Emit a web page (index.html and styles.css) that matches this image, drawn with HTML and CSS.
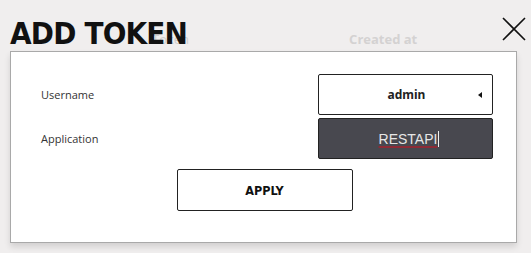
FILE: index.html
```html
<!DOCTYPE html>
<html>
<head>
<meta charset="utf-8">
<link rel="stylesheet" href="styles.css">
</head>
<body>
<div class="page">
  <div class="table-head">
    <span class="col col-token">Token</span>
    <span class="col col-created">Created at</span>
  </div>
  <div class="modal">
    <div class="modal-head">
      <h1 class="title">ADD TOKEN</h1>
      <button class="close" aria-label="Close">
        <svg width="24" height="24" viewBox="0 0 24 24"><path d="M1 1 L23 23 M23 1 L1 23" stroke="#111" stroke-width="1.6" fill="none"/></svg>
      </button>
    </div>
    <div class="card">
      <div class="row">
        <span class="label">Username</span>
        <div class="select">
          <span class="select-value">admin</span>
          <span class="caret-left"></span>
        </div>
      </div>
      <div class="row row-app">
        <span class="label">Application</span>
        <div class="input"><span class="input-text">RESTAPI</span><span class="cursor"></span></div>
      </div>
      <div class="actions">
        <button class="apply">APPLY</button>
      </div>
    </div>
  </div>
</div>
</body>
</html>
```
FILE: styles.css
```css
html, body {
  margin: 0;
  padding: 0;
}
body {
  background: #f0eeee;
  width: 531px;
  height: 253px;
  overflow: hidden;
  font-family: "Open Sans", "Liberation Sans", sans-serif;
}
.page {
  position: relative;
  width: 531px;
  height: 253px;
}
.table-head {
  display: flex;
  padding-top: 30px;
  font-family: "Open Sans", sans-serif;
  font-weight: 700;
  font-size: 13px;
  color: #d4d2d2;
}
.col-token { margin-left: 152px; font-weight: 400; color: #cfcdcd; }
.col-created { margin-left: 160px; }
.modal {
  position: absolute;
  inset: 0;
}
.modal-head {
  display: flex;
  justify-content: space-between;
  align-items: flex-start;
  height: 51px;
}
.title {
  margin: 16px 0 0 10px;
  font-family: "DejaVu Sans Condensed", "Liberation Sans", sans-serif;
  font-weight: 700;
  font-size: 31px;
  line-height: 34px;
  letter-spacing: -0.8px;
  color: #111;
}
.close {
  margin: 17px 5px 0 0;
  padding: 0;
  border: 0;
  background: none;
  width: 24px;
  height: 24px;
}
.close svg { display: block; }
.card {
  margin-left: 10px;
  width: 505px;
  height: 190px;
  background: #fff;
  border: 1px solid #a9a9a9;
  box-shadow: 0 4px 6px rgba(0,0,0,0.12);
}
.row {
  display: flex;
  align-items: center;
  justify-content: space-between;
  padding: 22px 23px 0 30px;
}
.row-app { padding-top: 3px; }
.label {
  font-size: 11px;
  color: #333;
}
.select {
  width: 173px;
  height: 39px;
  border: 1px solid #222;
  border-radius: 2px;
  display: flex;
  align-items: center;
  justify-content: center;
  position: relative;
  background: #fff;
}
.select-value {
  font-family: "Noto Sans", sans-serif;
  font-weight: 700;
  font-size: 12px;
  color: #222;
  margin-left: 2px;
}
.caret-left {
  position: absolute;
  right: 10px;
  top: 17px;
  width: 0;
  height: 0;
  border-top: 3px solid transparent;
  border-bottom: 3px solid transparent;
  border-right: 4px solid #111;
}
.input {
  width: 173px;
  height: 39px;
  border: 1px solid #222;
  border-radius: 2px;
  background: #48484f;
  display: flex;
  align-items: center;
  justify-content: center;
}
.input-text {
  font-family: "Liberation Sans", Arial, sans-serif;
  font-size: 14px;
  color: #e6e6e6;
  text-decoration: underline;
  text-decoration-color: #8e2b36;
  text-decoration-thickness: 2px;
  text-underline-offset: 2px;
  margin-left: 7px;
}
.cursor {
  width: 1px;
  height: 16px;
  background: #f0f0f0;
  margin-left: 1px;
}
.actions {
  display: flex;
  justify-content: center;
  padding-top: 10px;
  padding-left: 2px;
}
.apply {
  width: 176px;
  height: 42px;
  border: 1px solid #222;
  border-radius: 2px;
  background: #fff;
  font-family: "DejaVu Sans Condensed", sans-serif;
  font-weight: 700;
  font-size: 12.5px;
  color: #111;
  padding: 0;
}
```
